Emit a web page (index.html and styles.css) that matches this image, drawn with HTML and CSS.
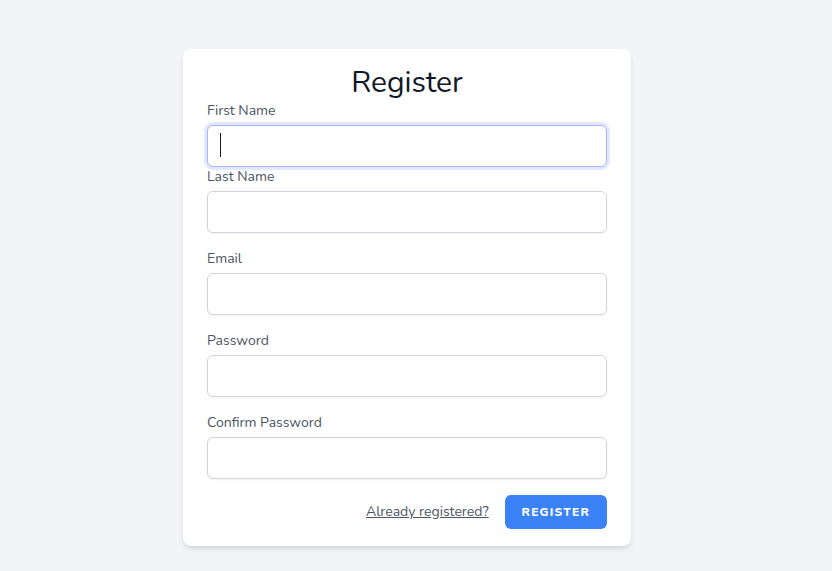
FILE: index.html
```html
<!DOCTYPE html>
<html lang="en">
<head>
<meta charset="utf-8">
<title>Register</title>
<link rel="stylesheet" href="styles.css">
</head>
<body>
<div class="page">
  <form class="card">
    <h1 class="title">Register</h1>
    <label class="label" for="first">First Name</label>
    <div class="input-wrap">
      <input class="input input-focus" id="first" type="text">
      <span class="caret"></span>
    </div>
    <label class="label" for="last">Last Name</label>
    <input class="input" id="last" type="text">
    <div class="field">
      <label class="label" for="email">Email</label>
      <input class="input" id="email" type="email">
    </div>
    <div class="field">
      <label class="label" for="pw">Password</label>
      <input class="input" id="pw" type="password">
    </div>
    <div class="field">
      <label class="label" for="pw2">Confirm Password</label>
      <input class="input" id="pw2" type="password">
    </div>
    <div class="actions">
      <a class="link" href="#">Already registered?</a>
      <button class="btn" type="button">Register</button>
    </div>
  </form>
</div>
</body>
</html>
```
FILE: styles.css
```css
* { box-sizing: border-box; }
html, body { margin: 0; padding: 0; }
body {
  background: #f3f4f6;
  font-family: "Nunito", "Lato", "Open Sans", sans-serif;
  color: #111827;
}
.page {
  min-height: 571px;
  display: flex;
  justify-content: center;
  padding-top: 49px;
  padding-right: 18px;
}
.card {
  width: 448px;
  height: 497px;
  background: #fff;
  border-radius: 8px;
  padding: 16px 24px;
  box-shadow: 0 4px 6px -1px rgba(0,0,0,0.1), 0 2px 4px -1px rgba(0,0,0,0.06);
  display: flex;
  flex-direction: column;
}
.title {
  margin: 0;
  font-size: 30px;
  line-height: 36px;
  font-weight: 400;
  text-align: center;
  color: #111827;
}
.field { margin-top: 16px; display: flex; flex-direction: column; }
.label {
  display: block;
  font-size: 14px;
  line-height: 20px;
  color: #4b5563;
  font-weight: 400;
}
.input-wrap { position: relative; }
.input {
  display: block;
  width: 100%;
  height: 42px;
  margin-top: 4px;
  padding: 8px 12px;
  font: inherit;
  font-size: 16px;
  line-height: 24px;
  border: 1px solid #d1d5db;
  border-radius: 6px;
  box-shadow: 0 1px 2px 0 rgba(0,0,0,0.05);
  outline: none;
  background: #fff;
}
.input-focus {
  border-color: #a5b4fc;
  box-shadow: 0 0 0 3px rgba(199,210,254,0.5);
}
.caret {
  position: absolute;
  left: 13px;
  top: 12px;
  width: 1px;
  height: 24px;
  background: #111827;
}
.actions {
  margin-top: 16px;
  display: flex;
  justify-content: flex-end;
  align-items: center;
}
.link {
  font-size: 14px;
  line-height: 20px;
  color: #4b5563;
  text-decoration: underline;
}
.btn {
  margin-left: 16px;
  height: 34px;
  padding: 8px 16px;
  background: #3b82f6;
  color: #fff;
  border: 1px solid transparent;
  border-radius: 6px;
  font: inherit;
  font-size: 12px;
  line-height: 16px;
  font-weight: 800;
  text-transform: uppercase;
  letter-spacing: 0.1em;
}
```
